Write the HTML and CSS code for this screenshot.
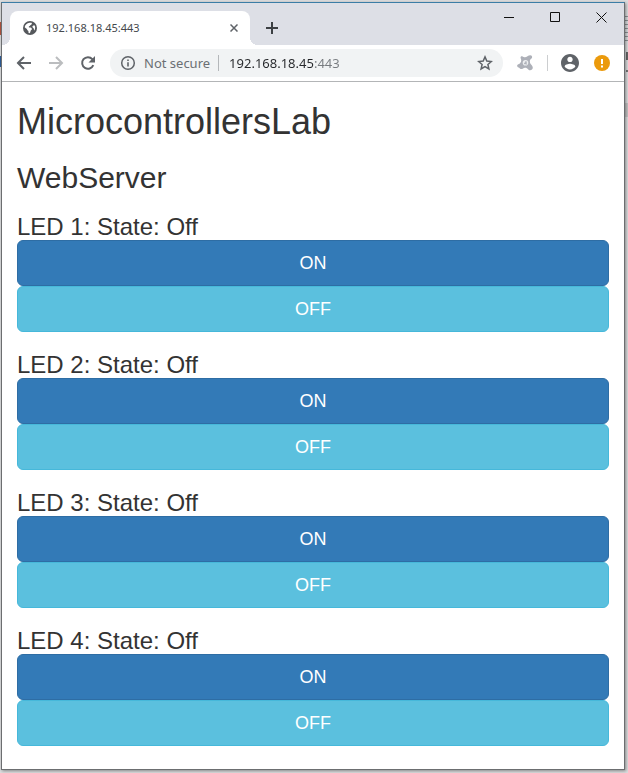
FILE: index.html
```html
<!DOCTYPE html>
<html lang="en">
<head>
  <meta charset="UTF-8">
  <meta name="viewport" content="width=device-width, initial-scale=1.0">
  <title>192.168.18.45:443</title>
  <link rel="stylesheet" href="styles.css">
</head>
<body>
  <div class="window">
    <div class="titlebar">
      <div class="tab">
        <svg class="favicon" viewBox="0 0 14 14"><circle cx="7" cy="7" r="7"/><path class="land" d="M8.500 1.800C9.300 2.600 8.800 3.600 7.800 3.900 6.900 4.200 7 5 6.300 5.200 5.600 5.500 5.600 6.200 6.300 6.400 7.600 6.500 8.900 6.600 8.900 7.900 8.900 9 7.700 9 7.600 10 7.500 11 7 12 6.300 12.200 5.500 12.100 5.400 11.400 5.500 10.700 5.600 9.600 4.300 9.600 4.100 8.500 4 7.500 2.700 7.200 1.700 6.200 2 3.700 4 1.900 6.500 1.700zM10.600 4.400c.8-.2 1.300.3 1.500 1.200.2 1.400 0 2.800-.7 3.900-.6-.4-.4-1.200-.6-1.900-.3-.8-1.400-1-1.400-1.900 0-.8.500-1.200 1.200-1.300z"/></svg>
        <span class="tab-title">192.168.18.45:443</span>
        <button class="tab-close" aria-label="Close tab"><svg viewBox="0 0 8 8" width="8" height="8"><path d="M0.500 0.500l7 7M7.500 0.500l-7 7"/></svg></button>
      </div>
      <button class="new-tab" aria-label="New tab"><svg viewBox="0 0 12 12" width="12" height="12"><path d="M6 0v12M0 6h12"/></svg></button>
      <div class="controls">
        <button aria-label="Minimize"><svg viewBox="0 0 11 11" width="11" height="11"><path d="M0 5.500h10"/></svg></button>
        <button aria-label="Maximize"><svg viewBox="0 0 11 11" width="11" height="11"><path d="M0.500 0.500h9v9h-9z"/></svg></button>
        <button aria-label="Close"><svg viewBox="0 0 11 11" width="11" height="11"><path d="M0.500 0.500l10 10M10.500 0.500l-10 10"/></svg></button>
      </div>
    </div>

    <div class="toolbar">
      <button class="tool" aria-label="Back"><svg viewBox="0 0 16 16" width="16" height="16"><path class="line" d="M15 8H2M8 2L2 8l6 6"/></svg></button>
      <button class="tool disabled" aria-label="Forward" disabled><svg viewBox="0 0 16 16" width="16" height="16"><path class="line" d="M1 8h13M8 2l6 6-6 6"/></svg></button>
      <button class="tool" aria-label="Reload"><svg viewBox="0 0 16 16" width="16" height="16"><path class="line" d="M13.300 10.200A5.800 5.800 0 1 1 12.300 4.100L14 6"/><path d="M15 1v6.500H8.500z"/></svg></button>
      <div class="omnibox">
        <svg viewBox="0 0 16 16" width="16" height="16"><circle class="thin" cx="8" cy="8" r="6.300"/><path d="M7.200 7.200h1.600v4.300H7.200zM7.200 4.500h1.600v1.600H7.200z"/></svg>
        <label class="security" for="address">Not secure</label>
        <input class="address" id="address" type="text" value="192.168.18.45:443">
        <button class="star" aria-label="Bookmark"><svg viewBox="0 0 16 16" width="16" height="16"><path class="thin" d="M8 1.900l1.800 4.200 4.500.4-3.400 3 1 4.400L8 11.600l-3.900 2.300 1-4.400-3.400-3 4.500-.4z"/></svg></button>
      </div>
      <button class="tool extension" aria-label="Extension">
        <svg viewBox="0 0 16 16" width="16" height="16"><path d="M4 1.500C5 .8 6 2 7.500 2.200 9.500 2.500 11 .3 13.300.2c2 0 2.500 2.500.9 3.500-1.500 1-1.500 2.600-1.100 4.300.3 1.500 2.700 2.400 2.700 4.600 0 2.700-3.100 3.600-4.500 1.900-1.100-1.400-2.300-1.800-4-1.600-1.600.2-2.100 1.500-3.500 1.100-1-.3-1.200-1.300-2.200-1.600-1.800-.5-2-2.600-.2-3.200C3.200 8.600 4 7.300 4.200 5.700 4.400 4 2.800 2.600 4 1.500z"/><circle class="hole" cx="8.500" cy="7.800" r="2.800"/><path d="M8.300 6l1.400.4v3.400l-1.200-.2V8.700l-.8.600-.7-.4.300-1.200 1.100-.5z"/></svg>
      </button>
      <span class="divider"></span>
      <button class="tool" aria-label="Profile"><svg viewBox="2 2 20 20" width="18" height="18"><path d="M12 2C6.480 2 2 6.480 2 12s4.480 10 10 10 10-4.480 10-10S17.520 2 12 2zm0 3c1.660 0 3 1.340 3 3s-1.340 3-3 3-3-1.340-3-3 1.340-3 3-3zm0 14.200c-2.500 0-4.710-1.280-6-3.220.03-1.990 4-3.080 6-3.080s5.970 1.090 6 3.080c-1.290 1.940-3.500 3.220-6 3.220z"/></svg></button>
      <button class="tool update" aria-label="Update"><svg viewBox="0 0 16 16" width="16" height="16"><circle cx="8" cy="8" r="8"/><path class="mark" d="M7 4h2v5H7zM7 10.500h2v2H7z"/></svg></button>
    </div>

    <div class="container">
      <h1>MicrocontrollersLab</h1>
      <h2>WebServer</h2>

      <h3>LED 1: State: Off</h3>
      <button class="btn btn-on">ON</button>
      <button class="btn btn-off">OFF</button>

      <h3>LED 2: State: Off</h3>
      <button class="btn btn-on">ON</button>
      <button class="btn btn-off">OFF</button>

      <h3>LED 3: State: Off</h3>
      <button class="btn btn-on">ON</button>
      <button class="btn btn-off">OFF</button>

      <h3>LED 4: State: Off</h3>
      <button class="btn btn-on">ON</button>
      <button class="btn btn-off">OFF</button>
    </div>
  </div>
</body>
</html>
```

FILE: styles.css
```css
*{
	box-sizing: border-box;
}
/* desktop behind the window */
body{
	margin: 0;
	min-height: 100vh;
	padding: 2px 3px 3px 1px;
	display: flex;
	background-color: #dcddde;
	background-image:
		linear-gradient(#b5543f, #b5543f),
		linear-gradient(#2f5f9a, #2f5f9a),
		repeating-linear-gradient(#8d9194 0 1px, #d9dcde 1px 4px),
		linear-gradient(#666, #666),
		linear-gradient(#777, #777),
		linear-gradient(#c4c4c4, #c4c4c4);
	background-repeat: no-repeat;
	background-size: 2px 13px, 2px 11px, 3px 25px, 2px 8px, 2px 2px, 3px 14px;
	background-position: 0 22px, 0 56px, 100% 16px, 100% 52px, 100% 70px, 100% 103px;
}
.window{
	flex: 1;
	min-width: 0;
	border: 1px solid #6c6e70;
	border-top-color: #3b7da6;
	background-color: #fff;
	box-shadow: 1px 1px 3px rgba(0,0,0,0.4);
}
button{
	border: 0;
	padding: 0;
	background: none;
	cursor: pointer;
}
svg{
	display: block;
	flex: none;
}

/* tab strip */
.titlebar{
	height: 42px;
	padding-left: 8px;
	display: flex;
	align-items: flex-end;
	background-color: #dddfe6;
}
.tab{
	position: relative;
	width: 240px;
	height: 34px;
	padding: 0 10px 0 13px;
	display: flex;
	align-items: center;
	border-radius: 8px 8px 0 0;
	background-color: #fff;
}
.tab::before,
.tab::after{
	content: "";
	position: absolute;
	bottom: 0;
	width: 8px;
	height: 8px;
}
.tab::before{
	right: 100%;
	background: radial-gradient(circle at 0 0, transparent 8px, #fff 8px);
}
.tab::after{
	left: 100%;
	background: radial-gradient(circle at 100% 0, transparent 8px, #fff 8px);
}
.favicon{
	width: 14px;
	height: 14px;
	fill: #55585c;
}
.favicon .land{
	fill: #fff;
}
.tab-title{
	flex: 1;
	margin-left: 9px;
	font: 11px/16px "Segoe UI", "Noto Sans", sans-serif;
	color: #45494d;
}
.tab-close{
	width: 12px;
	height: 12px;
	display: grid;
	place-items: center;
}
.tab-close svg{
	stroke: #5f6368;
	stroke-width: 1.5;
}
.new-tab{
	width: 28px;
	height: 34px;
	margin-left: 8px;
	display: grid;
	place-items: center;
}
.new-tab svg{
	stroke: #3c4043;
	stroke-width: 2;
}
.controls{
	margin-left: auto;
	align-self: flex-start;
	display: flex;
}
.controls button{
	width: 46px;
	height: 29px;
	display: grid;
	place-items: center;
}
.controls svg{
	fill: none;
	stroke: #111;
}

/* address bar */
.toolbar{
	height: 37px;
	padding: 0 6px;
	display: flex;
	align-items: center;
	border-bottom: 1px solid #b3b5b7;
}
.tool{
	width: 32px;
	height: 28px;
	display: grid;
	place-items: center;
	fill: #5f6368;
}
.line{
	fill: none;
	stroke: #5f6368;
	stroke-width: 2;
}
.thin{
	fill: none;
	stroke: #5f6368;
	stroke-width: 1.5;
}
.disabled .line{
	stroke: #bbbdbf;
}
.omnibox{
	flex: 1;
	min-width: 0;
	height: 28px;
	margin: 0 6px;
	padding: 0 10px;
	display: flex;
	align-items: center;
	border-radius: 14px;
	background-color: #f1f3f4;
	fill: #5f6368;
	font: 13px/20px "Segoe UI", "Noto Sans", sans-serif;
}
.security{
	margin-left: 8px;
	padding-right: 8px;
	border-right: 1px solid #b4b7ba;
	line-height: 16px;
	white-space: nowrap;
	color: #6b6f73;
}
/* the port is lighter than the host */
.address{
	flex: 1;
	min-width: 0;
	margin-left: 10px;
	padding: 0;
	border: 0;
	outline: 0;
	font: inherit;
	color: transparent;
	caret-color: #222;
	background: linear-gradient(90deg, #26282b 85px, #777b7f 85px);
	-webkit-background-clip: text;
	background-clip: text;
}
.extension{
	fill: #adb0b8;
}
.extension .hole{
	fill: #eceef0;
}
.divider{
	width: 1px;
	height: 16px;
	margin: 0 6px;
	background-color: #ccced0;
}
.update{
	fill: #eb9a0c;
}
.update .mark{
	fill: #fff;
}

/* page */
.container{
	padding: 20px 15px 23px;
	font-family: "Helvetica Neue", Helvetica, Arial, "Liberation Sans", sans-serif;
	color: #333;
}
h1,
h2,
h3{
	margin: 0;
	font-weight: 500;
}
h1{
	font-size: 36px;
	line-height: 39px;
}
h2{
	margin-top: 20px;
	font-size: 30px;
	line-height: 33px;
}
h3{
	margin-top: 20px;
	font-size: 24px;
	line-height: 26px;
}
.btn{
	display: block;
	width: 100%;
	padding: 10px 16px;
	border: 1px solid transparent;
	border-radius: 6px;
	font-family: inherit;
	font-size: 18px;
	line-height: 24px;
	color: #fff;
}
.btn-on{
	background-color: #337ab7;
	border-color: #2e6da4;
}
.btn-off{
	background-color: #5bc0de;
	border-color: #46b8da;
}
```
